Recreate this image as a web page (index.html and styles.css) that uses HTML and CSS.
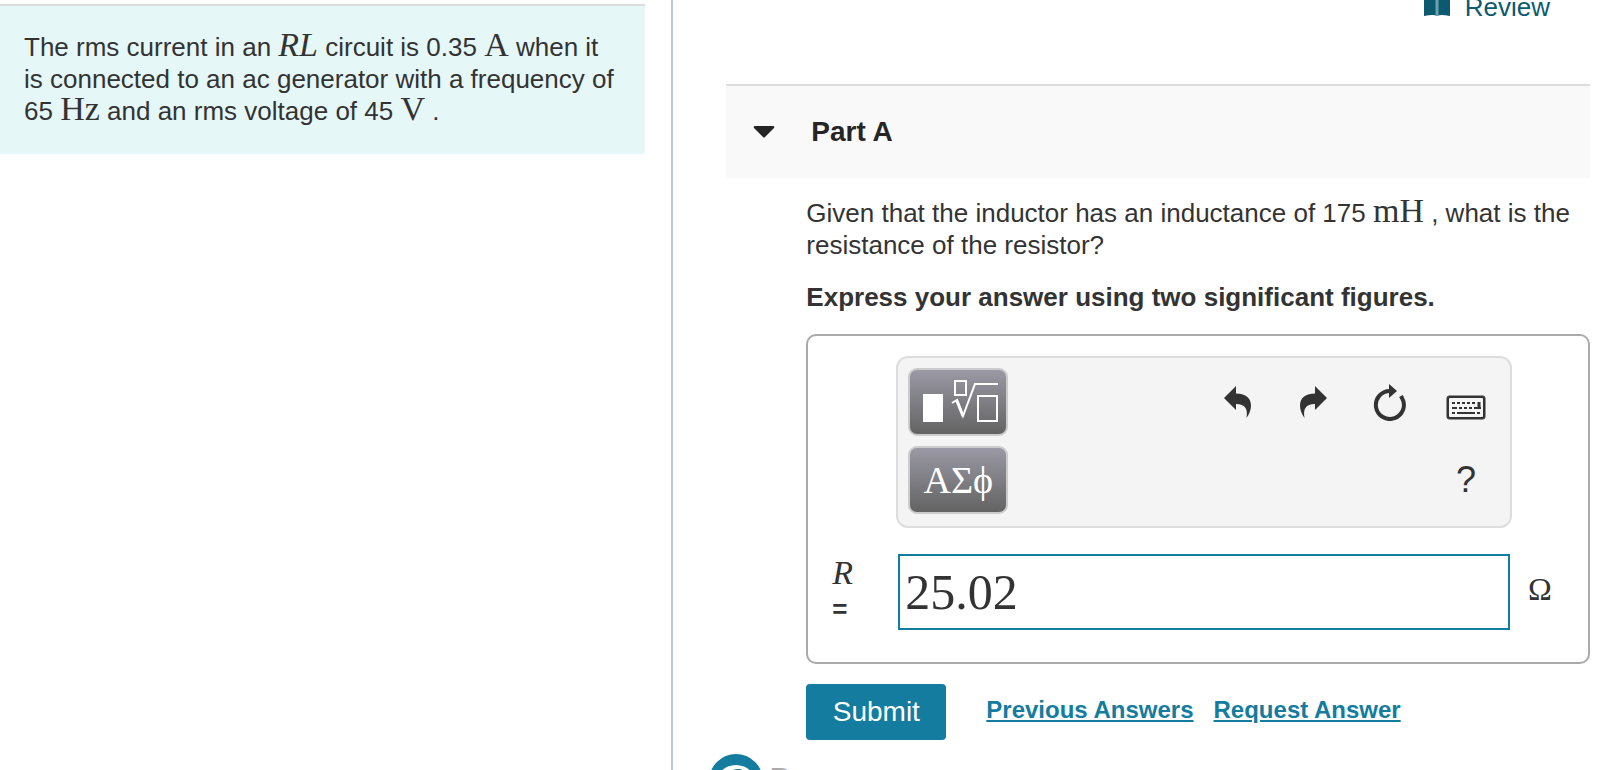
FILE: index.html
```html
<!DOCTYPE html>
<html lang="en">
<head>
    <meta charset="UTF-8">
    <meta name="viewport" content="width=device-width, initial-scale=1.0">
    <title>RL circuit</title>
    <link rel="stylesheet" href="styles.css">
</head>
<body>
    <div class="page">
        <!-- Problem statement -->
        <aside class="problem">
            <div class="intro">
                <p>The rms current in an <i class="math">RL</i> circuit is 0.35 <span class="math">A</span> when it is connected to an ac generator with a frequency of 65 <span class="math">Hz</span> and an rms voltage of 45 <span class="math">V</span> .</p>
            </div>
        </aside>

        <main class="work">
            <div class="topbar">
                <a href="#" class="review">
                    <svg width="26" height="24" viewBox="0 0 26 24">
                        <path d="M0 0h26v24q-10-2-13 0-3-2-13 0z" fill="#0b5a70"/>
                        <path d="M13 0v24" stroke="#6fa0ae" stroke-width="3"/>
                    </svg>
                    Review
                </a>
            </div>

            <div class="part-header">
                <svg width="22" height="14" viewBox="0 0 22 14">
                    <path d="M2 1h18q2 0 1 2l-9 9q-1 1-2 0l-9-9q-1-2 1-2z" fill="#252525"/>
                </svg>
                <h2>Part A</h2>
            </div>

            <div class="part-body">
                <p>Given that the inductor has an inductance of 175 <span class="math">mH</span> , what is the resistance of the resistor?</p>
                <p class="instructions">Express your answer using two significant figures.</p>

                <div class="answer-box">
                    <div class="toolbar">
                        <div class="palettes">
                            <button class="palette" aria-label="Templates">
                                <svg width="96" height="64" viewBox="0 0 96 64" fill="none" stroke="#fff" stroke-width="2">
                                    <rect x="13" y="24" width="20" height="28" fill="#fff" stroke="none"/>
                                    <rect x="45" y="11" width="11" height="14"/>
                                    <rect x="68" y="26" width="19" height="25"/>
                                    <path d="M42 33l5-3 6 16 12-32h23"/>
                                    <path d="M47 31l6 15" stroke-width="3"/>
                                </svg>
                            </button>
                            <button class="palette">ΑΣϕ</button>
                        </div>
                        <div class="actions">
                            <button aria-label="Undo">
                                <svg width="28" height="32" viewBox="0 0 28 32">
                                    <path d="M0 12L12 0v7.500c9 0 15 4 15 12 0 5-2 9-4.500 12.500 1.500-9-1-14-10.500-14V24z" fill="#333"/>
                                </svg>
                            </button>
                            <button aria-label="Redo">
                                <svg width="28" height="32" viewBox="0 0 28 32">
                                    <path d="M27 12L15 0v7.500c-9 0-15 4-15 12 0 5 2 9 4.500 12.500-1.500-9 1-14 10.500-14V24z" fill="#333"/>
                                </svg>
                            </button>
                            <button aria-label="Reset">
                                <svg width="34" height="38" viewBox="0 0 34 38">
                                    <path d="M18 8h-1a14 14 0 1 0 12 7l-1-2" fill="none" stroke="#333" stroke-width="4"/>
                                    <path d="M16 1l8 7-8 7z" fill="#333"/>
                                </svg>
                            </button>
                            <button aria-label="Keyboard">
                                <svg width="40" height="36" viewBox="0 -11 40 36" fill="none" stroke="#333">
                                    <rect x="2" y="2" width="36" height="21" rx="2" stroke-width="2"/>
                                    <rect x="1" y="1" width="38" height="23" rx="2" stroke-width="1"/>
                                    <path d="M6 8h24" stroke-width="2" stroke-dasharray="3 2"/>
                                    <path d="M6 13h5M13 13h3M18 13h3M23 13h3M28 13h7M6 18h3M11 18h18M31 18h3" stroke-width="2"/>
                                    <path d="M33 7v7" stroke-width="3"/>
                                </svg>
                            </button>
                            <button class="help" aria-label="Help">?</button>
                        </div>
                    </div>

                    <label class="variable" for="answer"><i class="math">R</i> <b>=</b></label>
                    <input type="text" id="answer" class="answer" value="25.02">
                    <span class="unit">Ω</span>
                </div>

                <div class="submit-row">
                    <button class="submit">Submit</button>
                    <a href="#">Previous Answers</a>
                    <a href="#">Request Answer</a>
                </div>
            </div>

            <footer class="brand">
                <svg width="54" height="54" viewBox="0 0 54 54">
                    <circle cx="27" cy="27" r="27" fill="#147c9e"/>
                    <circle cx="27" cy="32" r="21" fill="#fff"/>
                    <path d="M23 44V20q8-5 12 2 1 8-11 9" fill="none" stroke="#147c9e" stroke-width="6"/>
                </svg>
                <span>P</span>
            </footer>
        </main>
    </div>
</body>
</html>
```
FILE: styles.css
```css
* {
    box-sizing: border-box;
}

body {
    margin: 0;
    font-family: "Liberation Sans", Arial, sans-serif;
    font-size: 26px;
    line-height: 32px;
    color: #333;
    background-color: #fff;
}

p, h2 {
    margin: 0;
}

button {
    padding: 0;
    border: none;
    background: none;
    font-family: inherit;
    color: inherit;
    cursor: pointer;
}

svg {
    display: block;
}

.page {
    display: grid;
    grid-template-columns: 5fr 7fr;
    height: 100vh;
    overflow: hidden;
}

.math {
    font-family: "Liberation Serif", "Times New Roman", serif;
    font-size: 34px;
    line-height: 0;
}

/* left column */
.problem {
    margin-bottom: 18px;
    padding: 4px 26px 0 0;
    border-right: 2px solid #b8c9dd;
}

.intro {
    padding: 25px 24px 27px;
    border-top: 2px solid #ddd;
    background-color: #e6f7f8;
}

/* right column */
.work {
    padding: 0 26px 0 53px;
}

.topbar {
    display: flex;
    justify-content: flex-end;
    align-items: flex-end;
    height: 24px;
    padding-right: 40px;
}

.review {
    display: flex;
    align-items: center;
    gap: 15px;
    margin-bottom: 1px;
    color: #0b5a70;
    text-decoration: none;
}

.review svg {
    margin-bottom: 6px;
}

.part-header {
    display: flex;
    align-items: center;
    gap: 36px;
    height: 94px;
    margin-top: 60px;
    padding-left: 27px;
    border-top: 2px solid #ddd;
    background-color: #f9f9f9;
    color: #252525;
}

.part-header h2 {
    font-size: 28px;
}

.part-body {
    padding: 19px 0 0 80px;
}

.instructions {
    margin-top: 20px;
    font-weight: bold;
}

.answer-box {
    display: grid;
    grid-template-columns: 66px 1fr 54px;
    row-gap: 26px;
    align-items: center;
    margin-top: 21px;
    padding: 20px 24px 32px 24px;
    border: 2px solid #aaa;
    border-radius: 10px;
}

.toolbar {
    grid-column: 2;
    display: flex;
    justify-content: space-between;
    margin: 0 -2px;
    padding: 10px 6px 12px 10px;
    border: 2px solid #ddd;
    border-radius: 12px;
    background-color: #f4f4f4;
}

.palettes {
    display: flex;
    flex-direction: column;
    gap: 10px;
}

.palette {
    width: 100px;
    height: 68px;
    border: 2px solid #ccc;
    border-radius: 9px;
    background: linear-gradient(#9a99a5, #636363);
    font-family: "Liberation Serif", "Times New Roman", serif;
    font-size: 38px;
    color: #fff;
}

.actions {
    display: grid;
    grid-template-columns: repeat(4, 76px);
    grid-template-rows: 68px 68px;
    row-gap: 10px;
    justify-items: center;
}

.actions button {
    display: flex;
    align-items: center;
}

.actions .help {
    grid-column: 4;
    font-size: 36px;
}

.variable {
    grid-column: 1;
    width: 32px;
    line-height: 34px;
}

.answer {
    width: 100%;
    height: 76px;
    padding: 0 5px;
    border: 2px solid #147c9e;
    outline: none;
    font-family: "Liberation Serif", "Times New Roman", serif;
    font-size: 50px;
    color: #333;
}

.unit {
    padding: 0 0 6px 18px;
    font-family: "Liberation Serif", "Times New Roman", serif;
    font-size: 32px;
}

.submit-row {
    display: flex;
    align-items: center;
    gap: 20px;
    margin-top: 20px;
}

.submit {
    width: 140px;
    height: 56px;
    margin-right: 20px;
    border-radius: 4px;
    background-color: #147c9e;
    font-size: 28px;
    color: #fff;
}

.submit-row a {
    padding-bottom: 4px;
    font-size: 24px;
    font-weight: bold;
    color: #147c9e;
}

.brand {
    display: flex;
    align-items: center;
    gap: 6px;
    margin: 14px 0 0 -17px;
    font-size: 32px;
    color: #aaa;
}

.brand span {
    padding-bottom: 4px;
}
```
